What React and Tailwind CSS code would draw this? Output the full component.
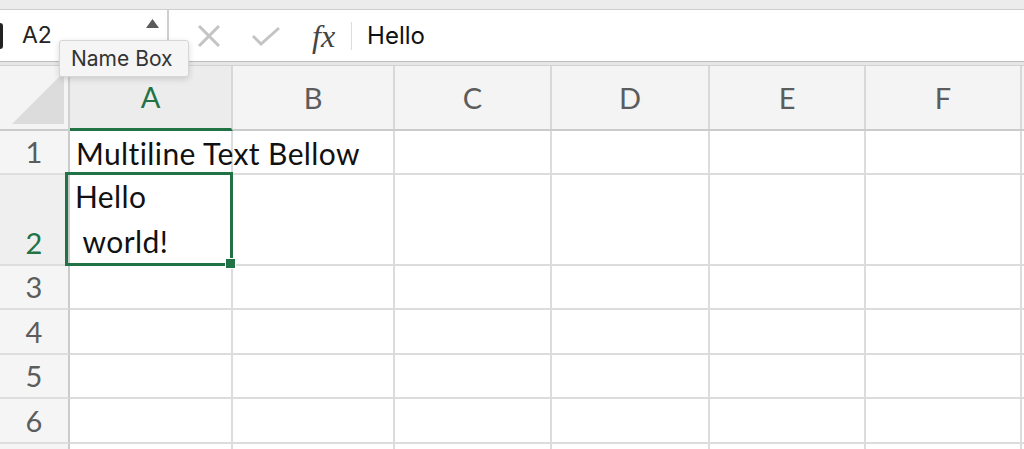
import React from "react";

const colW = ["w-[163px]", "w-[162px]", "w-[157px]", "w-[158px]", "w-[156px]", "w-[156px]"];
const letters = ["A", "B", "C", "D", "E", "F"];
const rows = [
  { n: "1", h: "h-[44px]" },
  { n: "2", h: "h-[91px]", sel: true },
  { n: "3", h: "h-[44px]" },
  { n: "4", h: "h-[45px]" },
  { n: "5", h: "h-[44px]" },
  { n: "6", h: "h-[45px]" },
  { n: "", h: "h-[44px]" },
];

function CellContent({ row, col }) {
  if (row === "1" && col === 0) {
    return (
      <div className="absolute left-[6px] bottom-[3px] whitespace-nowrap text-[30px] tracking-[0.4px] leading-[34px] text-[#111]">
        Multiline Text Bellow
      </div>
    );
  }
  if (row === "2" && col === 0) {
    return (
      <div className="absolute left-[5px] bottom-0 whitespace-pre text-[30px] tracking-[0.4px] leading-[45px] text-[#111]">
        <div>Hello</div>
        <div> world!</div>
      </div>
    );
  }
  return null;
}

export default function App() {
  return (
    <div className="relative w-[1024px] h-[449px] overflow-hidden bg-white font-['Lato',sans-serif]">
      {/* top strip */}
      <div className="h-[10px] bg-[#ececec] border-b border-[#cdcdcd]" />
      {/* formula bar */}
      <div className="flex h-[51px] bg-white">
        <div className="relative flex items-center w-[169px] border-r-2 border-[#cfcfcf]">
          <div className="w-[3px] h-[26px] bg-[#222] rounded-r-full" />
          <span className="ml-[19px] text-[23px] text-[#222] font-['Inter',sans-serif] leading-none">A2</span>
          <svg className="absolute left-[146px] top-[9px]" width="13" height="9" viewBox="0 0 13 9">
            <polygon points="6.5,0 13,9 0,9" fill="#5a5a5a" />
          </svg>
        </div>
        <div className="flex items-center flex-1 pl-[28px]">
          <svg width="24" height="22" viewBox="0 0 24 22">
            <path d="M2 1 L22 21 M22 1 L2 21" stroke="#c4c4c4" strokeWidth="3" fill="none" />
          </svg>
          <svg className="ml-[30px]" width="30" height="20" viewBox="0 0 30 20">
            <path d="M2 10 L10 18 L28 2" stroke="#c4c4c4" strokeWidth="3" fill="none" />
          </svg>
          <span className="ml-[31px] italic font-['Liberation_Serif',serif] text-[32px] leading-none text-[#444]">fx</span>
          <div className="ml-[16px] w-[1px] h-[28px] bg-[#dcdcdc]" />
          <span className="ml-[15px] text-[24px] text-[#111] font-['Inter',sans-serif] leading-none">Hello</span>
        </div>
      </div>
      <div className="h-[1px] bg-[#bdbdbd]" />
      <div className="h-[4px] bg-[#e6e6e6] border-b border-[#d2d2d2]" />

      {/* header row */}
      <div className="flex h-[65px] bg-[#f4f4f4] border-b-2 border-[#cbcbcb]">
        <div className="relative w-[70px] border-r-2 border-[#d0d0d0]">
          <svg className="absolute left-[12px] top-[6px]" width="52" height="52" viewBox="0 0 52 52">
            <polygon points="52,0 52,52 0,52" fill="#dcdcdc" />
          </svg>
        </div>
        {letters.map((l, i) => (
          <div
            key={l}
            className={
              colW[i] +
              " flex items-center justify-center border-r-2 border-[#d8d8d8] text-[29px] " +
              (i === 0
                ? "bg-[#ececec] text-[#217346] border-b-[3px] border-b-[#217346] -mb-[2px]"
                : "text-[#5c5c5c]")
            }
          >
            {l}
          </div>
        ))}
        <div className="flex-1" />
      </div>

      {/* rows */}
      {rows.map((r, idx) => (
        <div key={idx} className={"flex " + r.h}>
          <div
            className={
              "w-[70px] flex items-end justify-center pb-[5px] border-r-2 border-b-2 border-r-[#cbcbcb] border-b-[#dedede] text-[29px] leading-[32px] " +
              (r.sel ? "bg-[#efefef] text-[#217346]" : "bg-[#f5f5f5] text-[#5c5c5c]")
            }
          >
            {r.n}
          </div>
          {colW.map((w, i) => (
            <div key={i} className={w + " relative border-r-2 border-b-2 border-[#dcdcdc]"}>
              <CellContent row={r.n} col={i} />
            </div>
          ))}
          <div className="flex-1 border-b-2 border-[#dcdcdc]" />
        </div>
      ))}

      {/* selection */}
      <div className="absolute left-[65px] top-[172px] w-[168px] h-[94px] border-[3px] border-[#217346]" />
      <div className="absolute left-[225px] top-[258px] w-[11px] h-[11px] bg-[#217346] border border-white" />

      {/* tooltip */}
      <div className="absolute left-[59px] top-[40px] w-[130px] h-[37px] flex items-center pl-[11px] bg-[#f5f5f5] border border-[#d6d6d6] rounded-[3px] shadow-[0_2px_6px_rgba(0,0,0,0.15)] font-['Inter',sans-serif] text-[21px] text-[#333] leading-none">
        Name Box
      </div>
    </div>
  );
}
